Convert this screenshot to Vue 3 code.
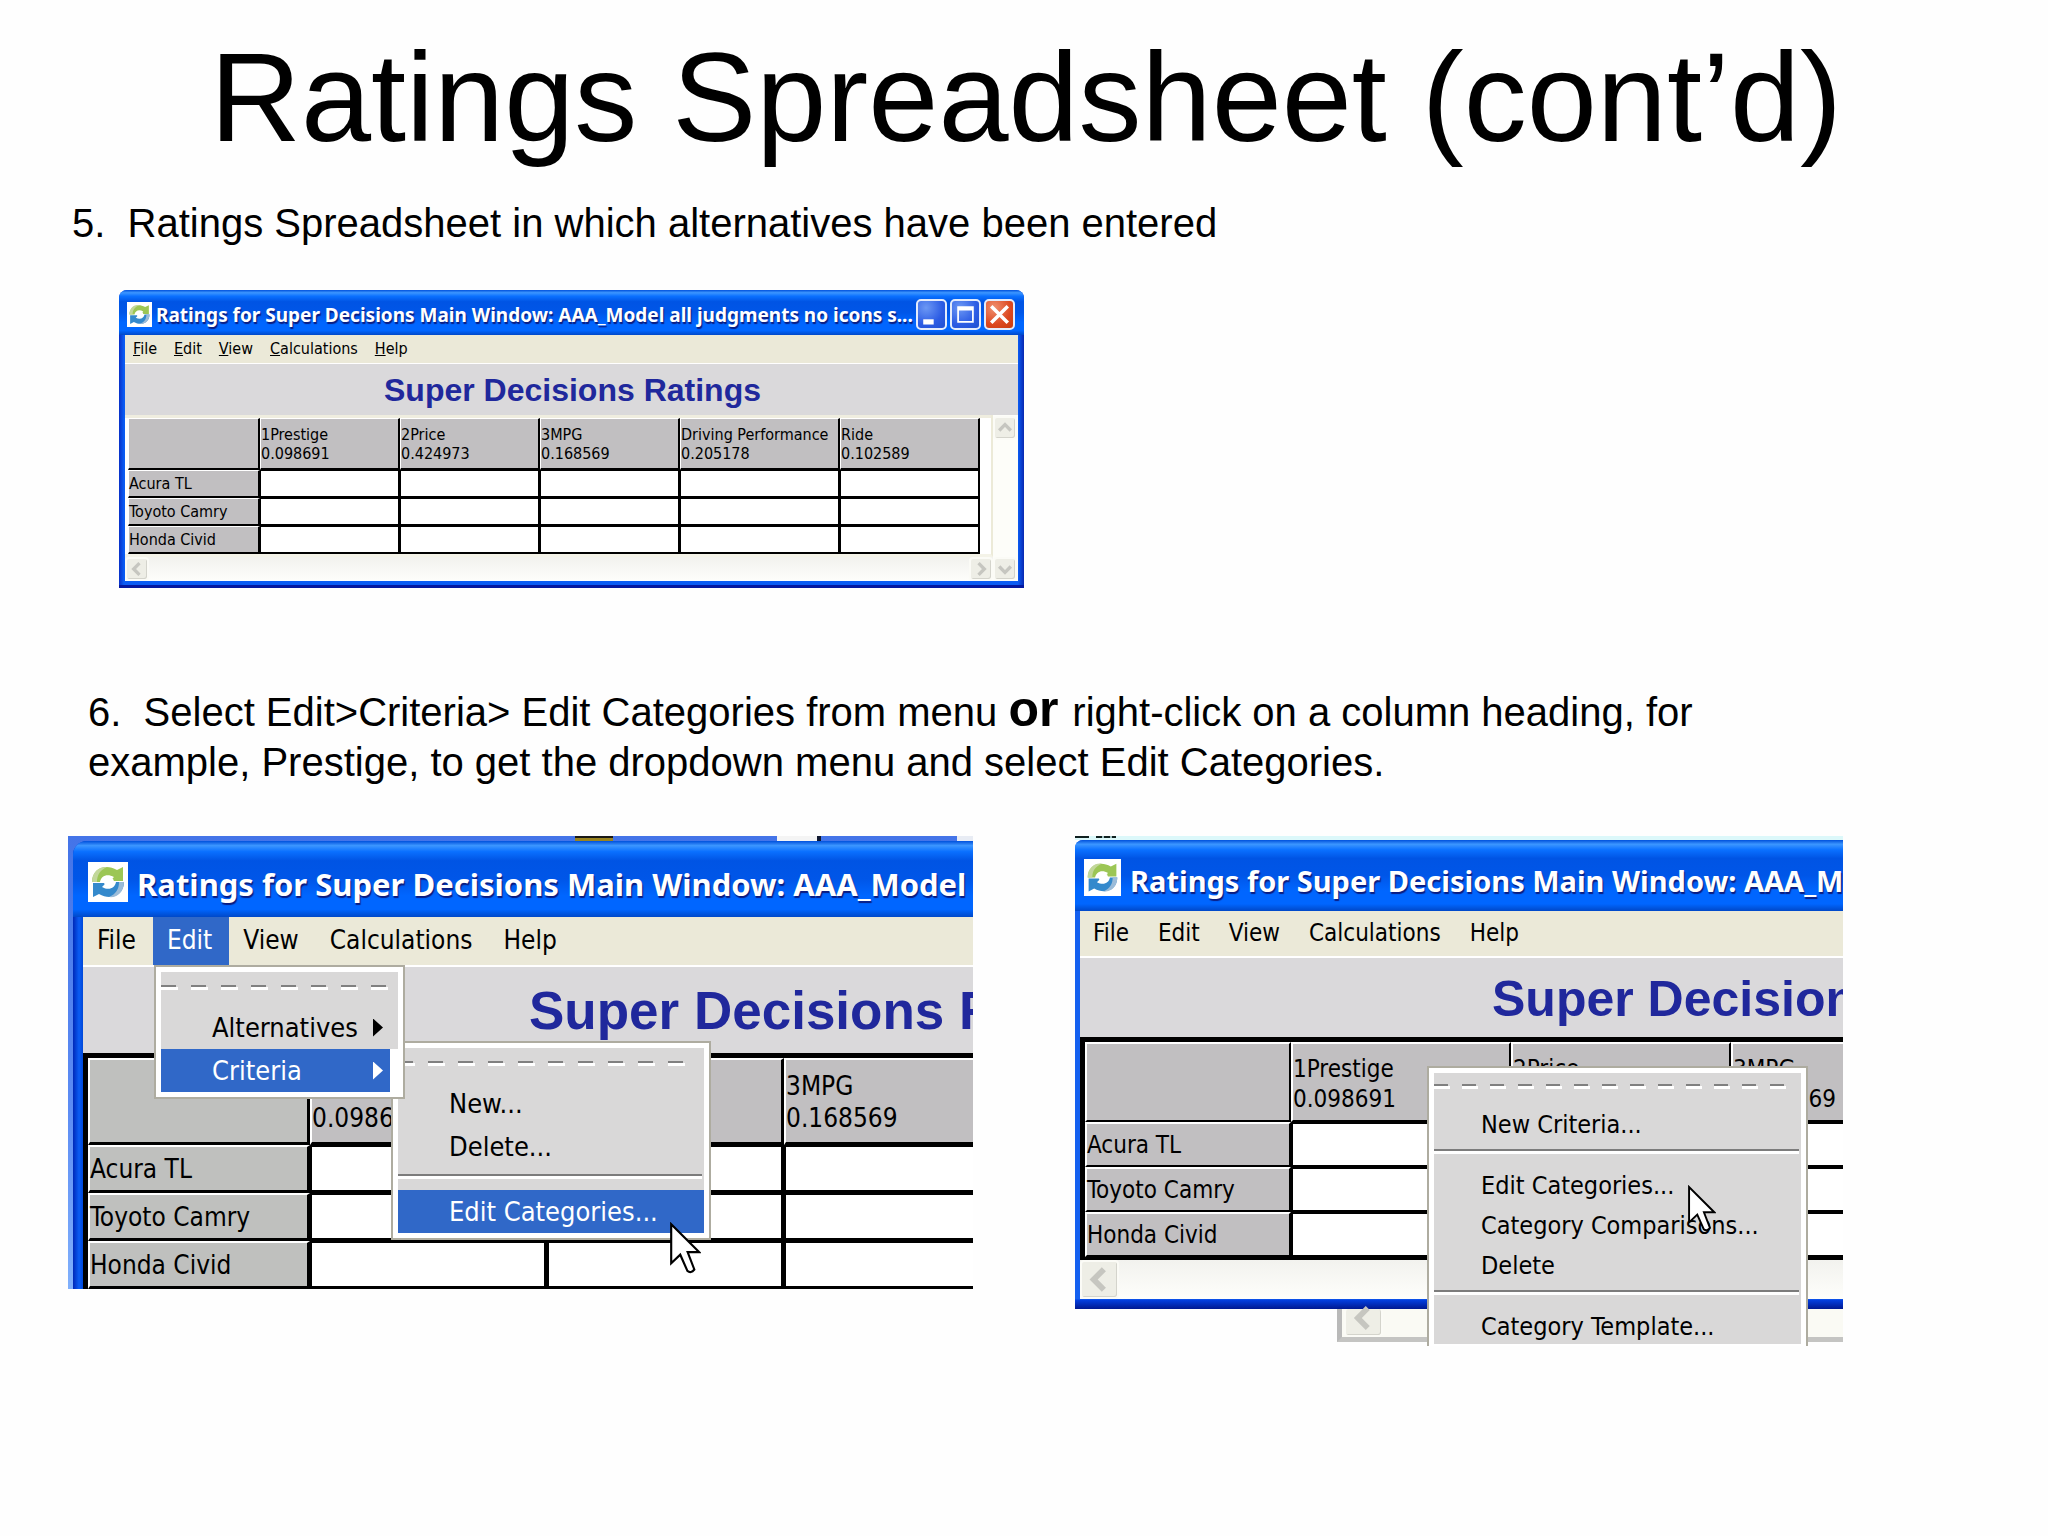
<script setup>
const menus = ['File', 'Edit', 'View', 'Calculations', 'Help']
const criteria = [
  { name: '1Prestige', weight: '0.098691' },
  { name: '2Price', weight: '0.424973' },
  { name: '3MPG', weight: '0.168569' },
  { name: 'Driving Performance', weight: '0.205178' },
  { name: 'Ride', weight: '0.102589' },
]
const alternatives = ['Acura TL', 'Toyoto Camry', 'Honda Civid']

const shots = [
  { id: 'full', title: 'Ratings for Super Decisions Main Window: AAA_Model all judgments no icons s...', columns: 5 },
  { id: 'edit', title: 'Ratings for Super Decisions Main Window: AAA_Model', open: 'Edit', columns: 3 },
  { id: 'context', title: 'Ratings for Super Decisions Main Window: AAA_Model', columns: 3 },
]
</script>

<template>
  <main class="slide">
    <h1>Ratings Spreadsheet (cont’d)</h1>
    <p class="step step-5">5.&nbsp; Ratings Spreadsheet in which alternatives have been entered</p>
    <p class="step step-6">
      6.&nbsp; Select Edit&gt;Criteria&gt; Edit Categories from menu <b>or </b>right-click on a column heading, for<br />
      example, Prestige, to get the dropdown menu and select Edit Categories.
    </p>

    <figure v-for="shot in shots" :key="shot.id" class="shot" :class="shot.id">
      <div v-if="shot.id !== 'full'" class="behind-top">
        <template v-if="shot.id === 'edit'">
          <i class="bit gold"></i><i class="bit paper"></i><i class="bit corner"></i>
        </template>
        <template v-else><i class="bit dash"></i><i class="bit dots"></i></template>
      </div>

      <section class="window">
        <header class="titlebar">
          <svg class="logo" viewBox="0 0 40 40" aria-hidden="true">
            <rect width="40" height="40" fill="#fff" />
            <path d="M4 20C4 7 17 1 29 8L35 5V19H22L26 15C19 11 13 14 12 20Z" fill="#9cc655" />
            <path d="M36 20C36 33 23 39 11 32L5 35V21H18L14 25C21 29 27 26 28 20Z" fill="#3489cc" />
            <path d="M4 20C4 9 12 4 19 5C12 8 9 13 9 20Z" fill="#c2d79a" />
            <path d="M36 20C36 31 28 36 21 35C28 32 31 27 31 20Z" fill="#9cbcd8" />
            <circle cx="21" cy="20" r="5" fill="#fff" />
          </svg>
          <span class="caption">{{ shot.title }}</span>
          <div v-if="shot.id === 'full'" class="controls">
            <button type="button" aria-label="Minimize">
              <svg viewBox="0 0 31 31"><rect x="6" y="21" width="12" height="6" fill="#fff" /></svg>
            </button>
            <button type="button" aria-label="Maximize">
              <svg viewBox="0 0 31 31"><path d="M6 6H25V25H6ZM8 11V23H23V11Z" fill="#fff" fill-rule="evenodd" /></svg>
            </button>
            <button type="button" class="close" aria-label="Close">
              <svg viewBox="0 0 31 31"><path d="M6 6L25 25M25 6L6 25" stroke="#fff" stroke-width="4" /></svg>
            </button>
          </div>
        </header>

        <nav class="menubar">
          <button v-for="m in menus" :key="m" type="button" :class="{ open: shot.open === m }">{{ m }}</button>
        </nav>

        <h2>Super Decisions Ratings</h2>

        <div class="body">
          <div class="pane">
            <div class="sheet">
              <table>
                <colgroup>
                  <col class="c-label" />
                  <col
                    v-for="(c, i) in criteria.slice(0, shot.columns)"
                    :key="c.name"
                    :class="i === 3 ? 'c-wide' : 'c-value'"
                  />
                </colgroup>
                <thead>
                  <tr>
                    <th></th>
                    <th v-for="c in criteria.slice(0, shot.columns)" :key="c.name" scope="col">
                      {{ c.name }}<br />{{ c.weight }}
                    </th>
                  </tr>
                </thead>
                <tbody>
                  <tr v-for="a in alternatives" :key="a">
                    <th scope="row">{{ a }}</th>
                    <td v-for="c in criteria.slice(0, shot.columns)" :key="c.name"></td>
                  </tr>
                </tbody>
              </table>
            </div>
            <div v-if="shot.id !== 'edit'" class="scroll across">
              <button type="button" aria-label="Scroll left">
                <svg viewBox="0 0 24 24"><path d="M15 5L8 12L15 19" /></svg>
              </button>
              <button v-if="shot.id === 'full'" type="button" aria-label="Scroll right">
                <svg viewBox="0 0 24 24"><path d="M9 5L16 12L9 19" /></svg>
              </button>
            </div>
          </div>
          <div v-if="shot.id === 'full'" class="scroll down">
            <button type="button" aria-label="Scroll up">
              <svg viewBox="0 0 24 24"><path d="M5 15L12 8L19 15" /></svg>
            </button>
            <button type="button" aria-label="Scroll down">
              <svg viewBox="0 0 24 24"><path d="M5 9L12 16L19 9" /></svg>
            </button>
          </div>
        </div>
      </section>

      <template v-if="shot.id === 'edit'">
        <div class="menu criteria-menu">
          <div class="menu-inner">
            <div class="tear"></div>
            <button type="button">New...</button>
            <button type="button">Delete...</button>
            <hr />
            <button type="button" class="active">Edit Categories...</button>
          </div>
        </div>
        <div class="menu edit-menu">
          <div class="menu-inner">
            <div class="tear"></div>
            <button type="button">Alternatives<i class="arrow"></i></button>
            <button type="button" class="active">Criteria<i class="arrow"></i></button>
          </div>
        </div>
      </template>

      <template v-if="shot.id === 'context'">
        <div class="behind-bottom">
          <button type="button" aria-label="Scroll left">
            <svg viewBox="0 0 24 24"><path d="M15 5L8 12L15 19" /></svg>
          </button>
        </div>
        <div class="menu context-menu">
          <div class="menu-inner">
            <div class="tear"></div>
            <button type="button">New Criteria...</button>
            <hr />
            <button type="button">Edit Categories...</button>
            <button type="button">Category Comparisons...</button>
            <button type="button">Delete</button>
            <hr />
            <button type="button">Category Template...</button>
          </div>
        </div>
      </template>

      <svg v-if="shot.id !== 'full'" class="cursor" viewBox="0 0 13 22" aria-hidden="true">
        <path
          d="M.5 .8V17.2L4.3 13.6L7.3 20.4Q8.8 21.6 10.2 19.8L7.4 12.5H12.2Z"
          fill="#fff" stroke="#000" stroke-width="0.9"
        />
      </svg>
    </figure>
  </main>
</template>

<style>
body {
  margin: 0;
  background: #fefefe;
}
</style>

<style scoped>
.slide {
  display: grid;
  grid-template-columns: 905fr 768fr;
  grid-template-rows: 170px 120px 397px 149px auto;
  column-gap: 102px;
  padding: 0 205px 40px 68px;
  min-height: 100vh;
  box-sizing: border-box;
  align-content: start;
  align-items: start;
  overflow: hidden;
  color: #000;
  font-family: "Liberation Sans", Arial, sans-serif;
}
h1 {
  grid-area: 1 / 1 / 2 / 3;
  margin: 0 -205px 0 -68px;
  padding: 26px 0 0 4px;
  font-size: 126px;
  line-height: 144px;
  font-weight: 400;
  text-align: center;
  white-space: nowrap;
}
.step {
  margin: 0;
  font-size: 40px;
  line-height: 50px;
  white-space: nowrap;
}
.step-5 {
  grid-area: 2 / 1 / 3 / 3;
  padding: 28px 0 0 4px;
}
.step-6 {
  grid-area: 4 / 1 / 5 / 3;
  padding-left: 20px;
}
.step b {
  font-size: 50px;
  line-height: 0;
}

/* Window captures share one structure; each sets its own zoom values. */
.shot {
  position: relative;
  margin: 0;
  overflow: hidden;
  min-width: 0;
}
.full {
  grid-area: 3 / 1;
  margin: 0 -51px 0 51px;
  --side: 6px;
  --title-h: 45px;
  --title-size: 19px;
  --logo: 25px;
  --logo-gap: 4px;
  --menu-h: 28px;
  --menu-size: 16px;
  --menu-pad: 0 9px 2px 8px;
  --head-h: 51px;
  --head-size: 32px;
  --out: 2px;
  --in: 1px;
  --cell: 16px;
  --cell-line: 19px;
  --cell-top: 6px;
  --header-h: 52px;
  --row-h: 28px;
  --label-w: 132px;
  --value-w: 140px;
  --wide-w: 160px;
  --frame: 3px;
  --sb: 24px;
}
.edit {
  grid-area: 5 / 1;
  background: linear-gradient(#4474e8, #5c8cf4 60%, #80b0fc);
  --side: 10px;
  --title-h: 76px;
  --title-size: 31px;
  --logo: 40px;
  --logo-gap: 9px;
  --menu-h: 48px;
  --menu-size: 26px;
  --menu-pad: 0 17px 2px 14px;
  --head-h: 86px;
  --head-size: 53px;
  --out: 3px;
  --in: 2px;
  --cell: 26px;
  --cell-line: 32px;
  --cell-top: 10px;
  --header-h: 87px;
  --row-h: 48px;
  --label-w: 222px;
  --value-w: 237px;
  --wide-w: 270px;
  --frame: 5px;
}
.context {
  grid-area: 5 / 2;
  padding-bottom: 4px;
  --side: 5px;
  --title-h: 71px;
  --title-size: 29px;
  --logo: 37px;
  --logo-gap: 9px;
  --menu-h: 45px;
  --menu-size: 24px;
  --menu-pad: 0 16px 2px 13px;
  --head-h: 79px;
  --head-size: 50px;
  --out: 2px;
  --in: 2px;
  --cell: 24px;
  --cell-line: 30px;
  --cell-top: 10px;
  --header-h: 80px;
  --row-h: 45px;
  --label-w: 206px;
  --value-w: 220px;
  --wide-w: 250px;
  --frame: 5px;
  --sb: 39px;
}
button {
  margin: 0;
  padding: 0;
  border: 0;
  background: none;
  color: inherit;
  font: inherit;
  text-align: left;
}
button svg {
  display: block;
  width: 100%;
  height: 100%;
}
.window {
  background: #0a4fe4;
  font-family: "DejaVu Sans Condensed", "DejaVu Sans", Tahoma, sans-serif;
}
.full .window {
  padding: 0 6px 7px;
  border-radius: 8px 8px 0 0;
  background: linear-gradient(90deg, #0830c8, #0a5cf4 5px, #0a5cf4 calc(100% - 6px), #0828b0);
  box-shadow: inset 0 -3px #0418a0;
}
.edit .window {
  margin-left: 5px;
  padding-left: var(--side);
  border-radius: 14px 0 0 0;
  background: linear-gradient(90deg, #0028b8, #0a5cf4 6px, #0048d8 10px);
}
.context .window {
  padding: 0 0 10px var(--side);
  border-radius: 8px 0 0 0;
  background: linear-gradient(#1460f0, #1460f0 calc(100% - 10px), #0440e0 calc(100% - 9px), #001890);
}
.titlebar {
  display: flex;
  align-items: center;
  gap: var(--logo-gap);
  height: var(--title-h);
  box-sizing: border-box;
  margin: 0 calc(var(--side) * -1);
  border-radius: 8px 8px 0 0;
  background: linear-gradient(#0050dc, #3c96ff 6%, #0a70ff 14%, #0054e4 26%, #0056e8 50%, #0066ff 72%, #0066ff 90%, #0048c8);
  color: #fff;
  overflow: hidden;
}
.full .titlebar {
  padding: 3px 9px 0 8px;
}
.edit .titlebar {
  padding: 5px 0 0 15px;
  margin-right: 0;
  border-radius: 14px 0 0 0;
}
.context .titlebar {
  padding: 4px 0 0 9px;
  margin-right: 0;
  border-radius: 8px 0 0 0;
}
.logo {
  flex: none;
  width: var(--logo);
  height: var(--logo);
}
.caption {
  flex: 1;
  min-width: 0;
  padding-top: 2px;
  font-family: "Noto Sans", "Trebuchet MS", sans-serif;
  font-size: var(--title-size);
  font-weight: 700;
  line-height: 1;
  white-space: nowrap;
  text-shadow: 1px 2px 1px #0a1c80;
}
.edit .caption,
.context .caption {
  padding-top: 5px;
}
.controls {
  display: flex;
  gap: 3px;
}
.controls button {
  width: 31px;
  height: 31px;
  box-sizing: border-box;
  border: 2px solid #e4ecfc;
  border-radius: 5px;
  background: radial-gradient(circle at 30% 25%, #6c98f4, #2c5ce4 60%, #2050d0);
}
.controls .close {
  background: radial-gradient(circle at 30% 25%, #f09070, #dc4820 60%, #c83c10);
}
.menubar {
  display: flex;
  height: var(--menu-h);
  background: #ebe9d8;
  font-size: var(--menu-size);
  border-bottom: 2px solid #fff;
}
.full .menubar {
  border-bottom-width: 1px;
}
.menubar button {
  padding: var(--menu-pad);
}
.full .menubar button::first-letter {
  text-decoration: underline;
}
.menubar .open {
  background: #3068c8;
  color: #fff;
}
h2 {
  box-sizing: border-box;
  margin: 0;
  height: var(--head-h);
  padding-top: 1px;
  background: #dad9db;
  color: #20289c;
  font-family: "Liberation Sans", Arial, sans-serif;
  font-size: var(--head-size);
  line-height: var(--head-h);
  font-weight: 700;
  text-align: center;
  white-space: nowrap;
  overflow: hidden;
}
.full h2 {
  padding-left: 2px;
}
.edit h2 {
  padding-left: 446px;
  text-align: left;
}
.context h2 {
  padding: 2px 0 0 412px;
  text-align: left;
}
.body {
  display: flex;
  background: #fff;
}
.pane {
  flex: 1;
  min-width: 0;
}
.sheet {
  padding: var(--frame) 0 0 var(--frame);
  background: #000;
  overflow: hidden;
}
.full .sheet {
  border-right: 2px solid #ecead8;
  border-bottom: 3px solid #f4f3e8;
  background: #fff;
  box-shadow: inset 0 3px #efeddf;
}
.context .sheet {
  padding-bottom: 3px;
}
table {
  width: 0;
  table-layout: fixed;
  border-spacing: 0;
  font-size: var(--cell);
  line-height: var(--cell-line);
}
.c-label {
  width: var(--label-w);
}
.c-value {
  width: var(--value-w);
}
.c-wide {
  width: var(--wide-w);
}
th,
td {
  box-sizing: border-box;
  height: var(--row-h);
  padding: 0;
  border-style: solid;
  border-width: var(--in) var(--out) var(--out) var(--in);
  border-color: #000;
  background: #fff;
  font-weight: 400;
  text-align: left;
  white-space: nowrap;
}
th {
  border-color: #fff #000 #000 #fff;
  background: #c1bfc1;
}
.edit th:first-child {
  background: #bfc0be;
}
thead th {
  height: var(--header-h);
  padding: var(--cell-top) 0 0;
  vertical-align: top;
}
.scroll {
  display: flex;
  justify-content: space-between;
  background: linear-gradient(#f2f2ee, #fefefb);
}
.across {
  height: var(--sb);
}
.down {
  width: 25px;
  flex-direction: column;
  padding-top: 1px;
  background: #fdfdf9;
}
.scroll button,
.behind-bottom button {
  width: var(--sb);
  height: var(--sb);
  box-sizing: border-box;
  border: 2px solid #fbfbf6;
  border-radius: 4px;
  background: #eeeee6;
  box-shadow: inset -1px -1px #d4d4cc;
}
.scroll path,
.behind-bottom path {
  fill: none;
  stroke: #c6c6c0;
  stroke-width: 4;
}

/* Slivers of the desktop round the captured windows */
.behind-top {
  display: flex;
  height: 5px;
}
.context .behind-top {
  height: 4px;
  background: #dcf8fa;
}
.bit {
  height: 5px;
}
.gold {
  width: 38px;
  margin-left: 507px;
  background: #9a8420;
  box-shadow: inset 0 2px #181818;
}
.paper {
  width: 40px;
  margin-left: 164px;
  border-right: 4px solid #101830;
  background: #f4f4f4;
}
.corner {
  width: 16px;
  margin-left: auto;
  background: #e8ecf4;
}
.dash {
  width: 14px;
  height: 2px;
  background: #102020;
}
.dots {
  width: 20px;
  height: 2px;
  margin-left: 7px;
  background: repeating-linear-gradient(90deg, #102020 0 6px, #a0c0c0 6px 8px);
}
.behind-bottom {
  height: 28px;
  margin-left: 262px;
  padding-left: 2px;
  border-left: 5px solid #b9b9b9;
  border-bottom: 5px solid #c4c4c2;
  background: #fafaf4;
}
.behind-bottom button {
  display: block;
  height: 28px;
  border-top: 0;
}
.behind-bottom svg {
  height: 34px;
  margin-top: -9px;
}

.menu {
  position: absolute;
  box-sizing: border-box;
  border: 2px solid #aeaca0;
  padding: 5px;
  background: #fff;
  font-family: "DejaVu Sans Condensed", "DejaVu Sans", Tahoma, sans-serif;
  font-size: 27px;
}
.menu-inner {
  background: #d9d8d8;
}
.menu button {
  display: flex;
  align-items: center;
  width: 100%;
  height: 43px;
  padding: 0 0 0 51px;
  white-space: nowrap;
}
.menu .active {
  background: #3068c8;
  color: #fff;
}
.menu hr {
  height: 0;
  margin: 0;
  border: 0;
  border-top: 2px solid #7c7c7c;
  border-bottom: 3px solid #fff;
}
.tear {
  height: 34px;
  background:
    repeating-linear-gradient(90deg, #808080 0 15px, transparent 15px 30px) 0 13px / 100% 2px no-repeat,
    repeating-linear-gradient(90deg, #fff 0 17px, transparent 17px 30px) 0 15px / 100% 3px no-repeat;
}
.edit-menu {
  left: 86px;
  top: 129px;
  width: 251px;
}
.edit-menu .active {
  width: 229px;
  box-shadow: 8px 0 #fff;
}
.edit-menu button {
  position: relative;
}
.arrow {
  position: absolute;
  left: 212px;
  width: 10px;
  height: 18px;
  background: currentColor;
  clip-path: polygon(0 0, 100% 50%, 0 100%);
}
.criteria-menu {
  left: 323px;
  top: 205px;
  width: 320px;
}
.criteria-menu hr {
  margin: 6px 2px 11px 0;
}
.criteria-menu .tear {
  background-size: 290px 2px, 290px 3px;
}
.context-menu {
  left: 352px;
  top: 230px;
  bottom: 0;
  width: 381px;
  padding-bottom: 2px;
  border-bottom: 0;
  font-size: 25px;
}
.context-menu .menu-inner {
  height: 100%;
  overflow: hidden;
}
.context-menu button {
  height: 40px;
  padding-left: 47px;
}
.context-menu hr {
  margin: 5px 2px 11px 0;
}
.context-menu .tear {
  height: 31px;
  background:
    repeating-linear-gradient(90deg, #808080 0 14px, transparent 14px 28px) 0 11px / 355px 2px no-repeat,
    repeating-linear-gradient(90deg, #fff 0 16px, transparent 16px 28px) 0 13px / 355px 3px no-repeat;
}
.cursor {
  position: absolute;
  left: 602px;
  top: 386px;
  width: 31px;
  height: 53px;
}
.context .cursor {
  left: 613px;
  top: 349px;
  width: 28px;
  height: 48px;
}
</style>
